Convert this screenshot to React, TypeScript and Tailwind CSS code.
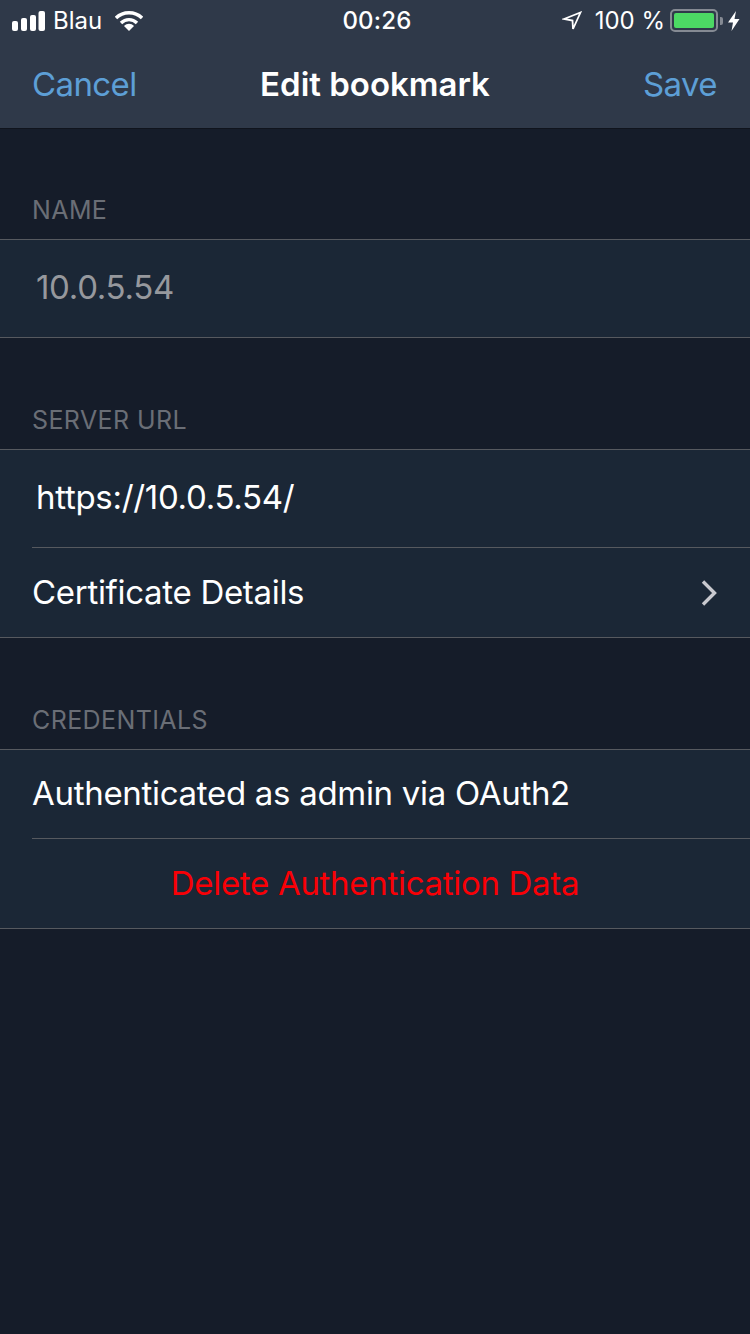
export default function App() {
  const label = "h-[111px] flex items-end pl-[32px] pb-[10px] text-[25px] tracking-[0.4px] text-[#6a6e76]";
  const row = "flex items-center text-[33px] tracking-[-0.3px]";
  return (
    <div className="min-h-[1334px] w-[750px] bg-[#151c29] font-['Inter',sans-serif] overflow-hidden">
      <header className="h-[129px] bg-[#2f3949] border-b border-[#10141d] flex flex-col">
        <div className="h-[41px] flex items-center relative text-white text-[24px] pl-[12px] pr-[10px]">
          <svg width="33" height="20" viewBox="0 0 33 20" className="shrink-0">
            <rect x="0" y="10" width="6" height="10" rx="2" fill="#fff" />
            <rect x="9" y="7" width="6" height="13" rx="2" fill="#fff" />
            <rect x="18" y="4" width="6" height="16" rx="2" fill="#fff" />
            <rect x="26.5" y="0" width="6.5" height="20" rx="2" fill="#fff" />
          </svg>
          <span className="ml-[8px] text-[24px] font-normal">Blau</span>
          <svg width="28" height="20" viewBox="0 0 28 20" className="ml-[13px]">
            <path d="M1 7 C8 0 20 0 27 7" fill="none" stroke="#fff" strokeWidth="3.4" />
            <path d="M6 12 C10.5 7.5 17.5 7.5 22 12" fill="none" stroke="#fff" strokeWidth="3.4" />
            <path d="M9 15 C12 12 16 12 19 15 L14 20 Z" fill="#fff" />
          </svg>
          <span className="absolute left-[4px] right-0 text-center font-medium text-[24px] tracking-[0.2px]">00:26</span>
          <div className="ml-auto flex items-center">
            <svg width="20" height="20" viewBox="0 0 20 20">
              <path d="M2 8 L18.5 1.5 L11 18 L10.5 9.5 Z" fill="none" stroke="#fff" strokeWidth="1.8" strokeLinejoin="miter" />
            </svg>
            <span className="ml-[13px] text-[24px]">100 %</span>
            <div className="ml-[5px] w-[48px] h-[23px] rounded-[5px] border-2 border-[#858a93] p-[2px]">
              <div className="w-full h-full rounded-[2px] bg-[#4cd964]" />
            </div>
            <div className="ml-[2px] w-[3px] h-[8px] rounded-r-[2px] bg-[#858a93]" />
            <svg width="12" height="20" viewBox="0 0 12 20" className="ml-[5px]">
              <path d="M8 0 L0 11.5 H5 L3.5 20 L11.5 8 H6.5 Z" fill="#fff" />
            </svg>
          </div>
        </div>
        <div className="flex-1 flex items-center justify-between relative pl-[32px] pr-[33px] text-[33px] tracking-[-0.6px] text-[#5d9fd6]">
          <span>Cancel</span>
          <span className="absolute left-0 right-0 text-center text-white font-semibold tracking-normal">Edit bookmark</span>
          <span>Save</span>
        </div>
      </header>

      <div className="h-[110px] flex items-end pl-[32px] pb-[10px] text-[25px] tracking-[0.4px] text-[#6a6e76]"><span>NAME</span></div>
      <section className="bg-[#1b2736] border-y border-[#56595f]">
        <div className={`h-[97px] pl-[36px] pb-[2px] text-[#96989d] ${row}`}>10.0.5.54</div>
      </section>

      <div className={label}><span>SERVER URL</span></div>
      <section className="bg-[#1b2736] border-y border-[#56595f]">
        <div className={`h-[97px] pl-[36px] pb-[2px] text-white ${row}`}>https://10.0.5.54/</div>
        <div className="ml-[32px] h-px bg-[#56595f]" />
        <div className={`h-[89px] justify-between pl-[32px] pr-[33px] text-white ${row}`}>
          <span>Certificate Details</span>
          <svg width="16" height="26" viewBox="0 0 16 26">
            <path d="M2 1.5 L13.5 13 L2 24.5" fill="none" stroke="#c9c9cf" strokeWidth="3.4" />
          </svg>
        </div>
      </section>

      <div className={label}><span>CREDENTIALS</span></div>
      <section className="bg-[#1b2736] border-y border-[#56595f]">
        <div className={`h-[88px] pl-[32px] text-white ${row}`}>Authenticated as admin via OAuth2</div>
        <div className="ml-[32px] h-px bg-[#56595f]" />
        <div className={`h-[89px] justify-center text-[#f90006] ${row}`}>Delete Authentication Data</div>
      </section>
    </div>
  );
}
